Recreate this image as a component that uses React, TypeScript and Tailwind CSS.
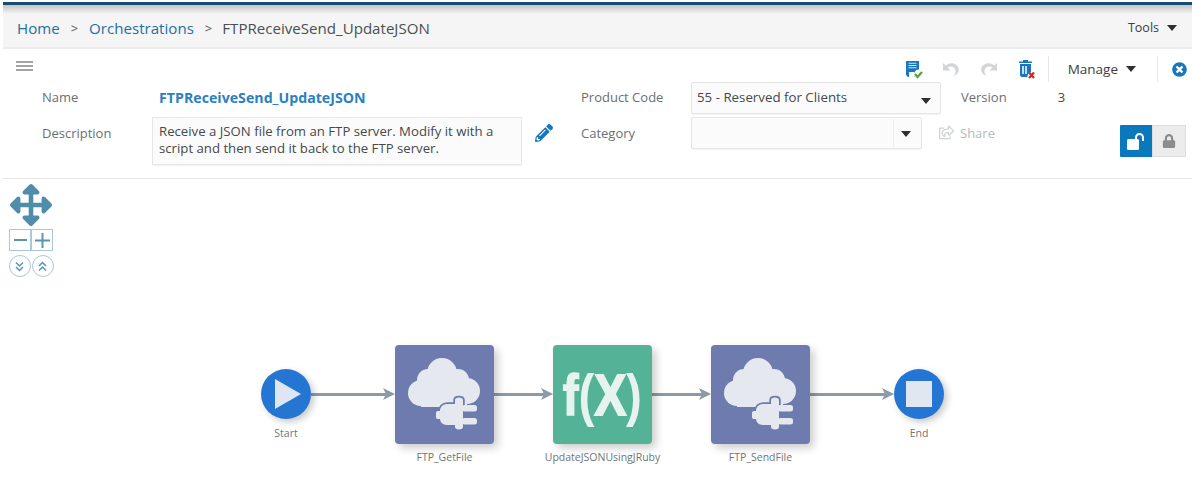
import type { ReactNode } from "react";
import { FaArrowsAlt, FaLock, FaPencilAlt, FaRegShareSquare, FaTimesCircle } from "react-icons/fa";

function Caret({ className = "" }: { className?: string }) {
  return (
    <svg width="10" height="6" viewBox="0 0 10 6" className={className}>
      <path d="M0 0h10L5 6z" fill="#2f2f2f" />
    </svg>
  );
}

function SaveIcon() {
  return (
    <svg width="18" height="19" viewBox="0 0 18 19">
      <path d="M1 1h13v8.500a5 5 0 0 0-4.500 7.500H3L1 15z" fill="#1b75bc" />
      <path d="M3.500 3.200h8M3.500 5.500h8M3.500 7.800h8" stroke="#cfe3f3" strokeWidth="1.100" />
      <path d="M4 12h5v5H4z" fill="#fff" />
      <path d="M10 14l2.500 3 4.500-5" fill="none" stroke="#5aa63c" strokeWidth="2.200" />
    </svg>
  );
}

function HistoryIcon({ flip }: { flip?: boolean }) {
  return (
    <svg width="18" height="15" viewBox="0 0 18 15" className={flip ? "-scale-x-100" : ""}>
      <path d="M1 1v7.500h7.500L5.500 5.500c3-2 7.500-.5 8 3.200.2 2.300-.8 4-2 5.300 3.800-1 5.800-4 5.300-7.200C16 1.500 8.500-1 3.700 3.500z" fill="#d3d5d7" />
    </svg>
  );
}

function DeleteIcon() {
  return (
    <svg width="18" height="19" viewBox="0 0 18 19">
      <path d="M5 0h5v1.500h4V3H1V1.500h4zM2 4h11v8a5 5 0 0 0-3.500 5H3.500L2 15.500z" fill="#1b75bc" />
      <path d="M5 6v8M8 6v8" stroke="#fff" strokeWidth="1.500" />
      <path d="M11 12.500l5 5.500M16 12.500l-5 5.500" stroke="#d9251c" strokeWidth="2.200" />
    </svg>
  );
}

function OpenLockIcon() {
  return (
    <svg width="19" height="17" viewBox="0 0 19 17">
      <rect x="0" y="6" width="12" height="11" rx="1.500" fill="#fff" />
      <path d="M9 7V4.500a3.500 3.500 0 0 1 7 0V8" fill="none" stroke="#fff" strokeWidth="2" />
    </svg>
  );
}

const plugBody = "M30 53h2c0-4 3-7 7-7h8v-4c0-1.500 1.500-2.500 4-2.500s4 1 4 2.500v27c0 1.500-1.500 2.500-4 2.500s-4-1-4-2.500v-2h-8c-4 0-7-3-7-6h-2c-1.500 0-2-1-2-2v-4c0-1 .5-2 2-2z";

function CloudPlug() {
  return (
    <svg width="74" height="73" viewBox="0 0 74 73" className="mb-[1px]">
      <g fill="#e6e8ef">
        <circle cx="13" cy="35" r="13" />
        <circle cx="20" cy="22" r="11" />
        <circle cx="34" cy="15" r="15" />
        <circle cx="50" cy="22" r="11" />
        <circle cx="59" cy="33" r="13" />
        <rect x="13" y="25" width="46" height="24" />
      </g>
      <path d={plugBody} fill="#6e7baf" stroke="#6e7baf" strokeWidth="3.500" />
      <path d={plugBody} fill="#e6e8ef" />
      <rect x="54" y="47" width="15" height="6.500" rx="2.500" fill="#e6e8ef" />
      <rect x="54" y="60" width="15" height="6.500" rx="2.500" fill="#e6e8ef" />
    </svg>
  );
}

function Field({ children, className = "" }: { children: ReactNode; className?: string }) {
  return (
    <div className={`flex items-center rounded-[2px] border border-[#e6e6e6] bg-[#fbfbfb] shadow-[0_1px_1px_rgba(0,0,0,0.05)] ${className}`}>
      {children}
    </div>
  );
}

function FlowNode({ x, label, children }: { x: number; label: string; children: ReactNode }) {
  return (
    <div className="absolute top-[166px] flex w-[99px] flex-col items-center" style={{ left: x }}>
      {children}
      <span className="mt-[6px] whitespace-nowrap text-[10.5px] leading-[14px] text-[#6f7477]">{label}</span>
    </div>
  );
}

function EventNode({ x, label, children }: { x: number; label: string; children: ReactNode }) {
  return (
    <div className="absolute top-[190px] flex w-[50px] flex-col items-center" style={{ left: x }}>
      <div className="flex size-[50px] items-center justify-center rounded-full bg-[#2576d2] shadow-[3px_3px_7px_rgba(0,0,0,0.22)]">
        {children}
      </div>
      <span className="mt-[7px] text-[10.5px] leading-[14px] text-[#6f7477]">{label}</span>
    </div>
  );
}

function Wire({ x, width }: { x: number; width: number }) {
  return (
    <div className="absolute top-[209px] flex items-center" style={{ left: x, width }}>
      <div className="h-[3px] flex-1 bg-[#8d9aa5]" />
      <svg width="12" height="12" viewBox="0 0 12 12" className="-ml-[4px] shrink-0">
        <path d="M0 0l12 6L0 12l3-6z" fill="#8d9aa5" />
      </svg>
    </div>
  );
}

function ZoomButton({ children }: { children: ReactNode }) {
  return <div className="flex size-[22px] items-center justify-center border border-[#a9c8d8]">{children}</div>;
}

function RoundButton({ up }: { up?: boolean }) {
  return (
    <div className="flex size-[22px] items-center justify-center rounded-full border border-[#a9c8d8]">
      <svg width="11" height="11" viewBox="0 0 11 11" className={up ? "rotate-180" : ""}>
        <path d="M2 1.500l3.500 3.500L9 1.500M2 6l3.500 3.500L9 6" fill="none" stroke="#5a94ae" strokeWidth="1.500" />
      </svg>
    </div>
  );
}

export default function App() {
  return (
    <div className="h-[487px] w-[1192px] overflow-hidden bg-white pl-[3px] pt-[2px] font-['Open_Sans','Noto_Sans',sans-serif] text-[#4a4f52]">
      <div className="h-[3px] bg-[#1a4a6e]" />
      <header className="flex h-[44px] items-center justify-between border-b-2 border-[#e9edf0] bg-[#f5f5f5] bg-[linear-gradient(#c4c4c4,#f5f5f5_9px)] pl-[14px] pr-[15px] pt-[4px]">
        <nav className="flex items-center text-[15.100px] leading-5">
          <span className="text-[#1f6f9f]">Home</span>
          <span className="ml-[11px] text-[13px] text-[#555]">&gt;</span>
          <span className="ml-[11px] text-[#1f6f9f]">Orchestrations</span>
          <span className="ml-[11px] text-[13px] text-[#555]">&gt;</span>
          <span className="ml-[10px] text-[#4a4f52]">FTPReceiveSend_UpdateJSON</span>
        </nav>
        <div className="flex items-center gap-[8px] text-[12.500px] text-[#3c4043]">
          Tools
          <Caret />
        </div>
      </header>

      <section className="border-b border-[#e8e8e8] pb-[13px]">
        <div className="flex h-[33px] items-center pr-[5px]">
          <div className="ml-[13px] flex h-[10px] w-[17px] flex-col justify-between">
            <div className="h-[2px] bg-[#a3a3a3]" />
            <div className="h-[2px] bg-[#a3a3a3]" />
            <div className="h-[2px] bg-[#a3a3a3]" />
          </div>
          <div className="ml-auto flex items-center pt-[7px]">
            <SaveIcon />
            <div className="ml-[19px]"><HistoryIcon /></div>
            <div className="ml-[20px]"><HistoryIcon flip /></div>
            <div className="ml-[20px]"><DeleteIcon /></div>
            <div className="ml-[12px] h-[26px] w-px bg-[#e8e8e8]" />
            <span className="ml-[19px] text-[13.500px] text-[#3c4043]">Manage</span>
            <Caret className="ml-[8px]" />
            <div className="ml-[21px] h-[26px] w-px bg-[#e8e8e8]" />
            <FaTimesCircle className="ml-[14px] text-[15px] text-[#1b75bc]" />
          </div>
        </div>

        <div className="flex">
          <div className="w-[578px] shrink-0 pl-[39px] text-[13px]">
            <div className="flex h-[32px] items-center">
              <span className="w-[117px] text-[#6a6f72]">Name</span>
              <span className="text-[14.200px] font-bold text-[#2b80c0]">FTPReceiveSend_UpdateJSON</span>
            </div>
            <div className="mt-[3px] flex items-start">
              <span className="mt-[7px] w-[110px] text-[#6a6f72]">Description</span>
              <div className="h-[48px] w-[370px] rounded-[1px] border border-[#e6e6e6] bg-[#fbfbfb] pl-[6px] pt-[5px] text-[13.200px] leading-[17px] text-[#45494c] shadow-[0_1px_1px_rgba(0,0,0,0.05)]">
                Receive a JSON file from an FTP server. Modify it with a script and then send it back to the FTP server.
              </div>
              <FaPencilAlt className="ml-[13px] mt-[7px] text-[18px] text-[#1b75bc]" />
            </div>
          </div>

          <div className="min-w-0 flex-1 text-[13px]">
            <div className="flex h-[32px] items-center">
              <span className="w-[110px] text-[#6a6f72]">Product Code</span>
              <Field className="h-[32px] w-[250px] justify-between pl-[5px] pr-[9px] text-[13.300px] text-[#45494c]">
                55 - Reserved for Clients
                <Caret className="mt-[6px]" />
              </Field>
              <span className="ml-[20px] text-[#6a6f72]">Version</span>
              <span className="ml-[51px] text-[#45494c]">3</span>
            </div>
            <div className="mt-[3px] flex items-start">
              <span className="mt-[7px] w-[110px] text-[#6a6f72]">Category</span>
              <Field className="h-[32px] w-[231px]">
                <div className="h-[28px] flex-1 border-r border-[#ededed]" />
                <Caret className="ml-[7px] mr-[10px] mt-px" />
              </Field>
              <FaRegShareSquare className="ml-[17px] mt-[8px] text-[15px] text-[#cfd2d4]" />
              <span className="ml-[6px] mt-[7px] text-[#b6babc]">Share</span>
              <div className="ml-auto mr-[6px] mt-[8px] flex h-[32px] w-[66px] overflow-hidden rounded-[1px]">
                <div className="flex flex-1 items-center justify-center bg-[#0a78bd]">
                  <OpenLockIcon />
                </div>
                <div className="flex flex-1 items-center justify-center border border-[#dcdcdc] bg-[#ececec]">
                  <FaLock className="text-[14px] text-[#8c8c8c]" />
                </div>
              </div>
            </div>
          </div>
        </div>
      </section>

      <main className="relative h-[308px]">
        <div className="ml-[6px] flex w-[44px] flex-col items-center pt-[5px]">
          <FaArrowsAlt className="text-[42px] text-[#4f8dab]" />
          <div className="mt-[3px] flex">
            <ZoomButton><div className="h-[2px] w-[13px] bg-[#5a94ae]" /></ZoomButton>
            <ZoomButton>
              <svg width="15" height="15" viewBox="0 0 15 15"><path d="M7.500 0v15M0 7.500h15" stroke="#5a94ae" strokeWidth="2" /></svg>
            </ZoomButton>
          </div>
          <div className="mt-[4px] flex gap-px">
            <RoundButton />
            <RoundButton up />
          </div>
        </div>

        <Wire x={308} width={84} />
        <Wire x={491} width={59} />
        <Wire x={649} width={59} />
        <Wire x={807} width={84} />

        <EventNode x={258} label="Start">
          <svg width="26" height="30" viewBox="0 0 26 30" className="ml-[4px]"><path d="M0 0l26 15L0 30z" fill="#dde6f2" /></svg>
        </EventNode>

        <FlowNode x={392} label="FTP_GetFile">
          <div className="flex size-[99px] items-center justify-center rounded-[4px] bg-[#6e7baf] shadow-[4px_4px_9px_rgba(0,0,0,0.2)]"><CloudPlug /></div>
        </FlowNode>

        <FlowNode x={550} label="UpdateJSONUsingJRuby">
          <div className="flex size-[99px] items-center justify-center rounded-[4px] bg-[#54b396] shadow-[4px_4px_9px_rgba(0,0,0,0.2)]">
            <span className="inline-block scale-x-[0.82] font-['Liberation_Sans',sans-serif] text-[58px] font-bold leading-none text-[#e6f3ef]">
              <span className="[-webkit-text-stroke:1.5px_#e6f3ef]">f</span>(<span className="[-webkit-text-stroke:2px_#e6f3ef]">X</span>)
            </span>
          </div>
        </FlowNode>

        <FlowNode x={708} label="FTP_SendFile">
          <div className="flex size-[99px] items-center justify-center rounded-[4px] bg-[#6e7baf] shadow-[4px_4px_9px_rgba(0,0,0,0.2)]"><CloudPlug /></div>
        </FlowNode>

        <EventNode x={891} label="End">
          <div className="size-[26px] bg-[#e0e7f1]" />
        </EventNode>
      </main>
    </div>
  );
}
